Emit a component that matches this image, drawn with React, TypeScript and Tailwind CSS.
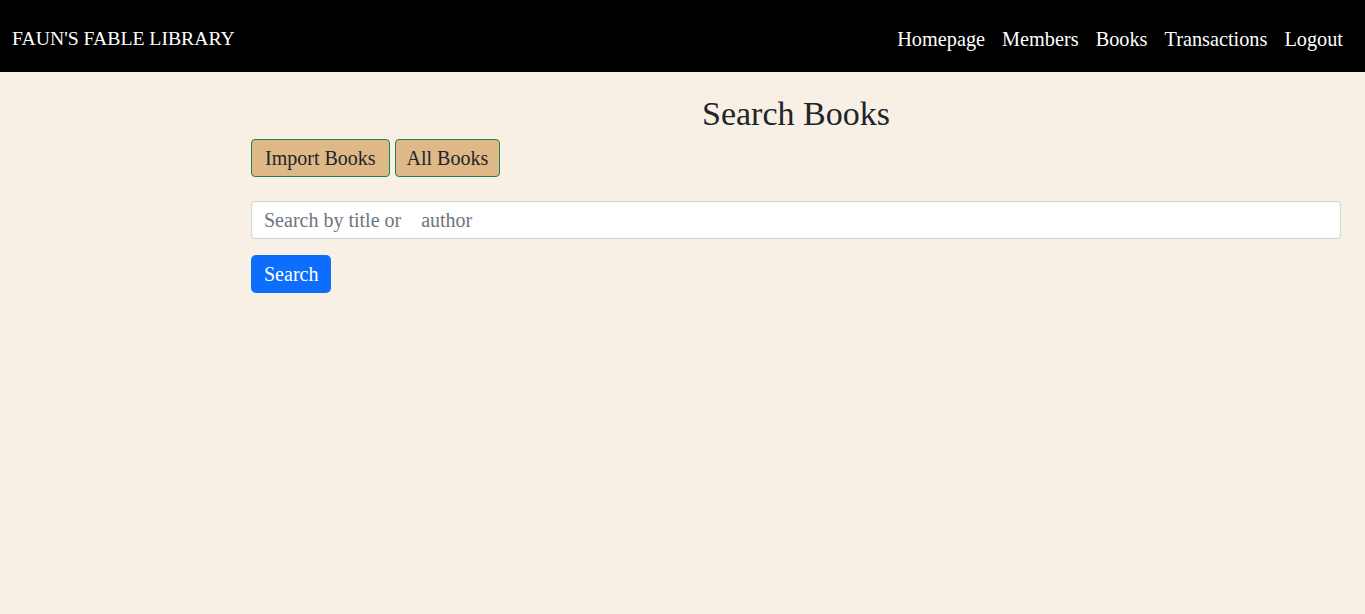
import React from "react";

export default function App() {
  const serif = { fontFamily: '"Liberation Serif", "Times New Roman", serif' };
  return (
    <div className="min-h-[614px] w-full bg-[#f8f0e5]" style={serif}>
      <nav className="flex h-[72px] items-center justify-between bg-black pl-[12px] pr-[22px] pt-[6px]">
        <span className="text-[19.7px] leading-none text-white">FAUN&apos;S FABLE LIBRARY</span>
        <ul className="flex items-center gap-[17px] text-[20.3px] leading-none text-white">
          <li>Homepage</li>
          <li>Members</li>
          <li>Books</li>
          <li>Transactions</li>
          <li>Logout</li>
        </ul>
      </nav>
      <main className="pl-[251px] pr-[24px] pt-[22px]">
        <h1 className="text-center text-[34px] leading-[40px] text-[#212529]">Search Books</h1>
        <div className="mt-[5px] flex gap-[5px]">
          <button className="h-[38px] rounded-[4px] border border-[#198754] bg-[#deb887] px-[13px] text-[20px] text-[#212529]">
            Import Books
          </button>
          <button className="h-[38px] rounded-[4px] border border-[#198754] bg-[#deb887] px-[11px] text-[20px] text-[#212529]">
            All Books
          </button>
        </div>
        <div className="mt-[24px]">
          <input
            className="h-[38px] w-full rounded-[4px] border border-[#ced4da] bg-white px-[12px] text-[20px] text-[#212529] placeholder:text-[#6c757d] outline-none"
            placeholder={"Search by title or \u00a0\u00a0\u00a0author"}
            style={serif}
          />
        </div>
        <button className="mt-[16px] h-[38px] rounded-[5px] bg-[#0d6efd] px-[13px] text-[20px] text-white">
          Search
        </button>
      </main>
    </div>
  );
}
